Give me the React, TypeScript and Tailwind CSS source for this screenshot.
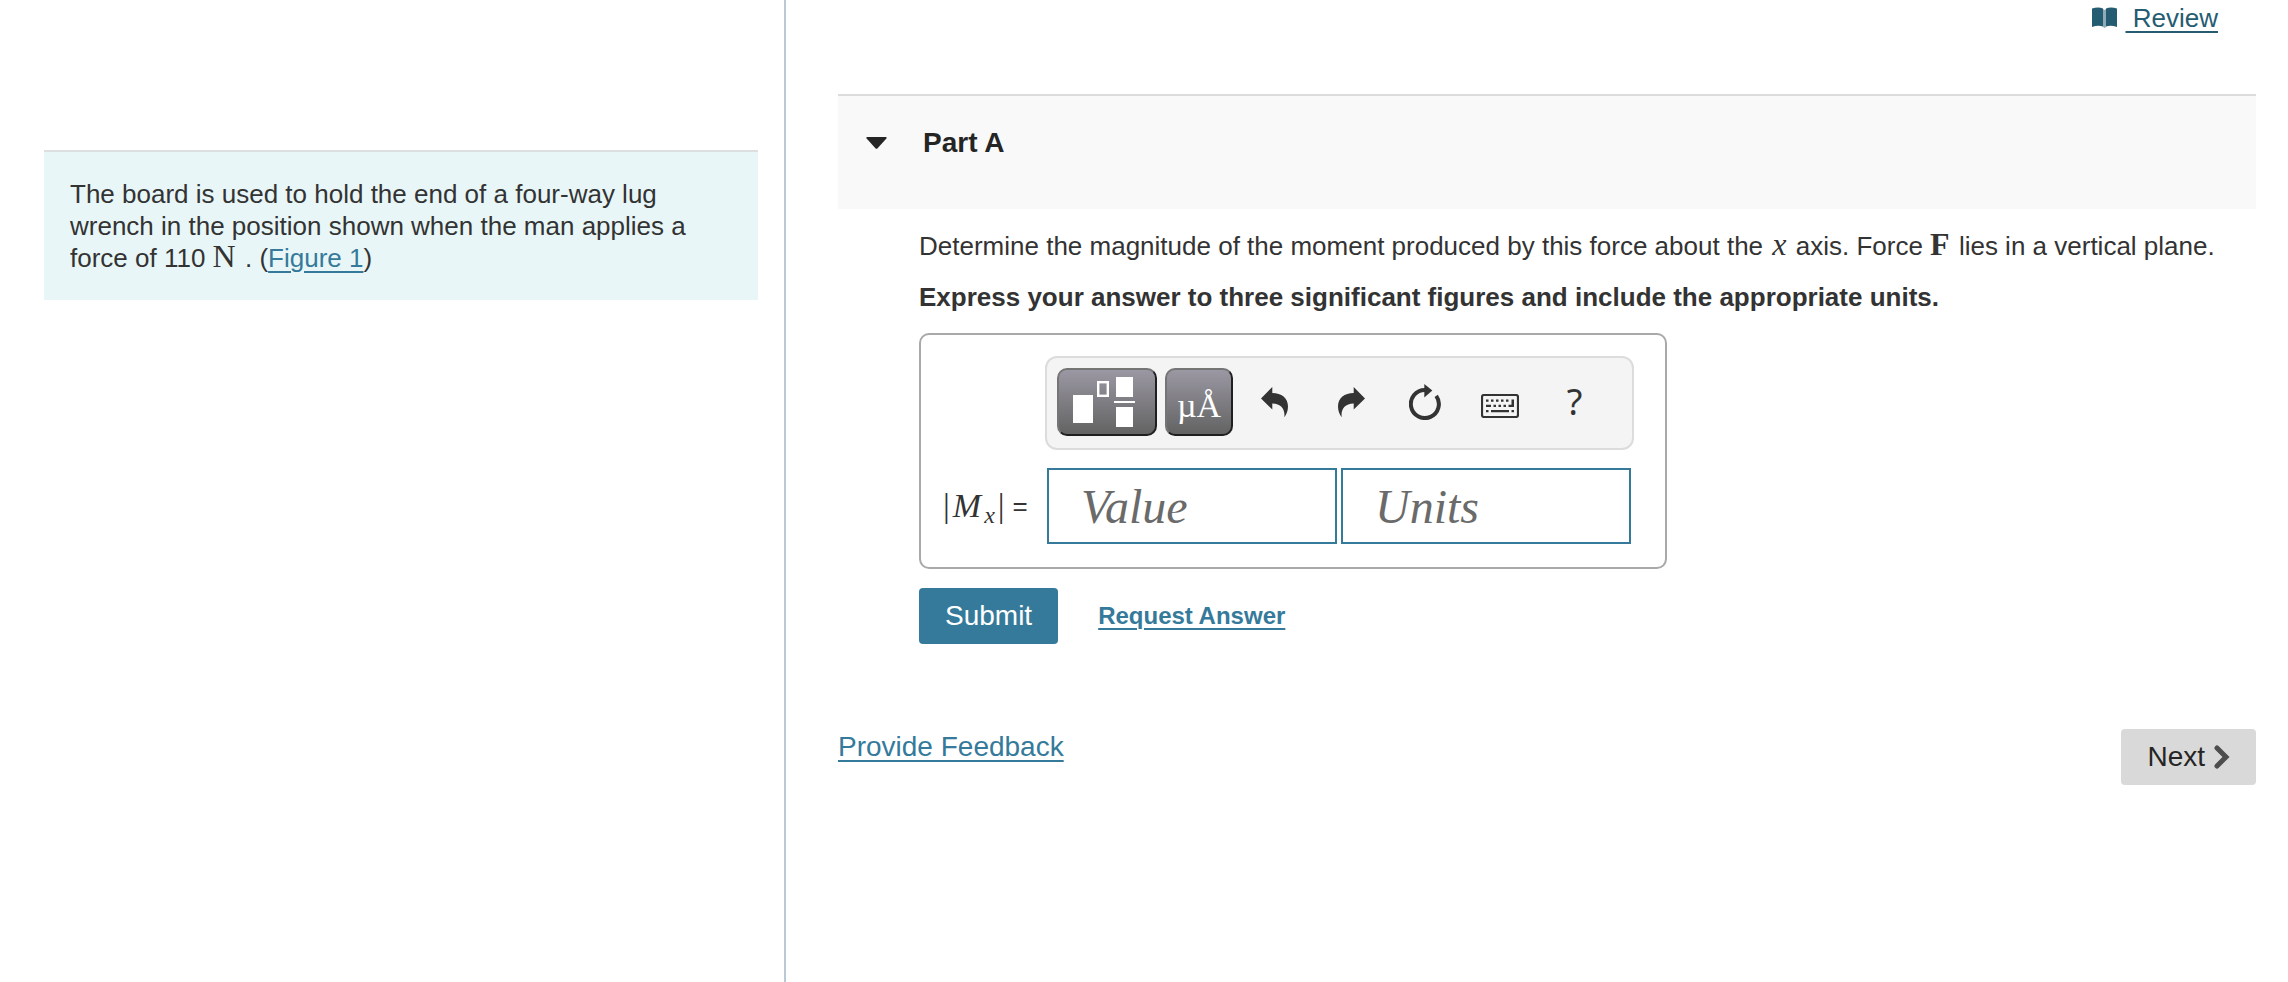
import type { ReactNode } from "react";

function BookIcon() {
  return (
    <svg width="26" height="21" viewBox="0 0 26 21" aria-hidden="true">
      <path d="M0 1.5C4 0 8 0 11 1.5V19.5C8 18.4 4 18.4 0 20Z" fill="#255c72" />
      <path d="M14 1.5C17 0 21 0 25 1.5V20C21 18.4 17 18.4 14 19.5Z" fill="#255c72" />
      <path d="M11 2L12.5 3L14 2V20L12.5 21L11 20Z" fill="#8fabb7" />
    </svg>
  );
}

function TemplatesIcon() {
  return (
    <svg width="68" height="52" viewBox="0 0 68 52" fill="#fff" aria-hidden="true">
      <rect x="0" y="19" width="20" height="28" />
      <rect x="25.2" y="6.2" width="9.6" height="13.6" fill="none" stroke="#fff" strokeWidth="2.4" />
      <rect x="43" y="1" width="17" height="20" />
      <rect x="41" y="25" width="21" height="2" />
      <rect x="43" y="31" width="17" height="20" />
    </svg>
  );
}

function ArrowIcon({ className = "" }: { className?: string }) {
  return (
    <svg width="27" height="30" viewBox="0 0 27 30" className={className} aria-hidden="true">
      <path
        d="M0 11.5L11.3 0V6C20.5 6 27 11 27 19.5C27 23.5 25.5 27.5 23.3 30.3C24.3 22.5 20.5 16.8 11.3 16.5V22.5Z"
        fill="#333"
      />
    </svg>
  );
}

function ResetIcon() {
  return (
    <svg width="32" height="36" viewBox="0 0 32 36" aria-hidden="true">
      <path d="M16 6A14 14 0 1 0 27.2 11.8" fill="none" stroke="#333" strokeWidth="4" />
      <path d="M15.3 0L23.3 6.6L15.3 13.6Z" fill="#333" />
    </svg>
  );
}

function KeyboardIcon() {
  return (
    <svg width="38" height="24" viewBox="0 0 38 24" fill="#333" aria-hidden="true">
      <rect x="1" y="1" width="36" height="22" rx="2" fill="none" stroke="#333" strokeWidth="2.2" />
      <path d="M5 5.5h2.5v2.2H5zM10 5.5h2.5v2.2H10zM15 5.5h2.5v2.2H15zM20 5.5h2.5v2.2H20zM25 5.5h2.5v2.2H25z" />
      <path d="M5 10.8h5v2.2H5zM12.5 10.8h2.5v2.2h-2.5zM17.5 10.8H20v2.2h-2.5zM22.5 10.8H25v2.2h-2.5z" />
      <path d="M30.5 5.5H33V13h-5.5v-2.2h3z" />
      <path d="M5 16h2.5v2.2H5zM10 16h18v2.2H10zM30.5 16H33v2.2h-2.5z" />
    </svg>
  );
}

function MathButton({ label, className, children }: { label: string; className: string; children: ReactNode }) {
  return (
    <button
      type="button"
      aria-label={label}
      className={`flex h-[68px] items-center justify-center rounded-[10px] border-2 border-t-[#757575] border-r-[#1f1f1f] border-b-[#1f1f1f] border-l-[#757575] bg-linear-to-b from-[#9b98a3] to-[#636363] text-white ${className}`}
    >
      {children}
    </button>
  );
}

function ToolButton({ label, children }: { label: string; children: ReactNode }) {
  return (
    <button type="button" aria-label={label} className="flex h-[68px] w-[67px] items-center justify-center">
      {children}
    </button>
  );
}

function Toolbar() {
  return (
    <div className="flex gap-2 rounded-xl border-2 border-[#dcdcdc] bg-[#f4f4f4] pt-[10px] pr-[14px] pb-3 pl-[10px]">
      <MathButton label="Templates" className="w-[100px]">
        <TemplatesIcon />
      </MathButton>
      <MathButton label="Symbols" className="w-[68px]">
        <span className="pt-2 font-['Liberation_Serif',serif] text-[34px] leading-10">µÅ</span>
      </MathButton>
      <ToolButton label="Undo">
        <ArrowIcon />
      </ToolButton>
      <ToolButton label="Redo">
        <ArrowIcon className="ml-1 -scale-x-100" />
      </ToolButton>
      <ToolButton label="Reset">
        <ResetIcon />
      </ToolButton>
      <ToolButton label="Keyboard shortcuts">
        <span className="pt-2">
          <KeyboardIcon />
        </span>
      </ToolButton>
      <ToolButton label="Help">
        <span className="font-['Noto_Sans',sans-serif] text-4xl text-[#333]">?</span>
      </ToolButton>
    </div>
  );
}

function AnswerField({ id, placeholder }: { id: string; placeholder: string }) {
  return (
    <input
      id={id}
      type="text"
      aria-label={placeholder}
      placeholder={placeholder}
      className="h-[76px] w-[290px] border-2 border-[#367a9b] bg-white px-8 font-['Liberation_Serif',serif] text-[48px] italic placeholder:text-[#6a6a6a] placeholder:opacity-100"
    />
  );
}

function AnswerBox() {
  return (
    <div className="grid w-fit grid-cols-[100px_auto] gap-y-[18px] rounded-[10px] border-2 border-[#a9a9a9] pt-[21px] pr-[31px] pb-[23px] pl-[22px]">
      <div className="col-start-2 pl-0.5">
        <Toolbar />
      </div>
      <label htmlFor="value" className="flex items-center whitespace-nowrap">
        <span className="flex items-baseline gap-[3px] font-['Liberation_Serif',serif] text-[34px] leading-8">
          <span>|</span>
          <i>M</i>
          <sub className="text-2xl leading-none">
            <i>x</i>
          </sub>
          <span>|</span>
        </span>
        <span className="ml-2">=</span>
      </label>
      <div className="flex gap-1 pr-[3px] pl-1">
        <AnswerField id="value" placeholder="Value" />
        <AnswerField id="units" placeholder="Units" />
      </div>
    </div>
  );
}

function ProblemStatement() {
  return (
    <aside className="w-[786px] shrink-0 border-r-2 border-[#b9c9d6] pt-[150px] pr-[26px] pl-11">
      <p className="border-t-2 border-[#dcdfdf] bg-[#e8f6f7] px-[26px] pt-[26px] pb-[26px]">
        The board is used to hold the end of a four-way lug wrench in the position shown when the man applies a force
        of 110 <span className="pr-0.5 font-['Liberation_Serif',serif] text-[32px] leading-0">N</span> . (
        <a href="#figure" className="text-[#367a9b] underline decoration-2 underline-offset-4">
          Figure 1
        </a>
        )
      </p>
    </aside>
  );
}

export default function App() {
  return (
    <div className="flex min-h-screen bg-white font-['Liberation_Sans',Arial,sans-serif] text-[26px] leading-8 text-[#333]">
      <ProblemStatement />

      <main className="min-w-0 flex-1 pr-8 pl-[52px]">
        <div className="flex h-[94px] items-start justify-end gap-2 pt-[2px] pr-[38px] text-[#255c72]">
          <span className="pt-[5px]">
            <BookIcon />
          </span>
          <a href="#review" className="underline decoration-2 underline-offset-4">
            &nbsp;Review
          </a>
        </div>

        <header className="flex h-[115px] items-start border-t-2 border-[#dcdcdc] bg-[#f9f9f9] pt-[31px] pl-7 text-[#252525]">
          <button type="button" aria-label="Collapse Part A" className="flex h-8 w-[57px] items-center">
            <svg width="21" height="12" viewBox="0 0 21 12" aria-hidden="true">
              <path d="M1 0H20Q21.2 .6 20.4 1.6L11.6 11.2Q10.5 12.2 9.4 11.2L.6 1.6Q-.2 .6 1 0Z" fill="#252525" />
            </svg>
          </button>
          <h2 className="text-[28px] font-bold">Part A</h2>
        </header>

        <form className="pt-[21px] pl-[81px]" onSubmit={(e) => e.preventDefault()}>
          <p>
            Determine the magnitude of the moment produced by this force about the{" "}
            <i className="px-0.5 font-['Liberation_Serif',serif] text-[32px] leading-0">x</i> axis. Force{" "}
            <b className="pr-0.5 font-['Liberation_Serif',serif] text-[32px] leading-0">F</b> lies in a vertical plane.
          </p>
          <p className="mt-[19px] mb-[20px] font-bold">
            Express your answer to three significant figures and include the appropriate units.
          </p>

          <AnswerBox />

          <div className="mt-[19px] flex items-center gap-10">
            <button type="submit" className="h-14 rounded bg-[#367a9b] px-[26px] text-[28px] text-white">
              Submit
            </button>
            <a href="#answer" className="text-2xl font-bold text-[#367a9b] underline decoration-2 underline-offset-4">
              Request Answer
            </a>
          </div>
        </form>

        <footer className="mt-[85px] flex items-start justify-between text-[28px]">
          <a href="#feedback" className="pt-0.5 text-[#367a9b] underline decoration-2 underline-offset-4">
            Provide Feedback
          </a>
          <button
            type="button"
            className="flex h-14 items-center gap-2 rounded bg-[#d9d9d9] px-[26px] text-[#252525]"
          >
            Next
            <svg width="17" height="26" viewBox="0 0 17 26" aria-hidden="true">
              <path d="M4 4L13 13L4 22" fill="none" stroke="#4d4d4d" strokeWidth="5" strokeLinecap="round" />
            </svg>
          </button>
        </footer>
      </main>
    </div>
  );
}
